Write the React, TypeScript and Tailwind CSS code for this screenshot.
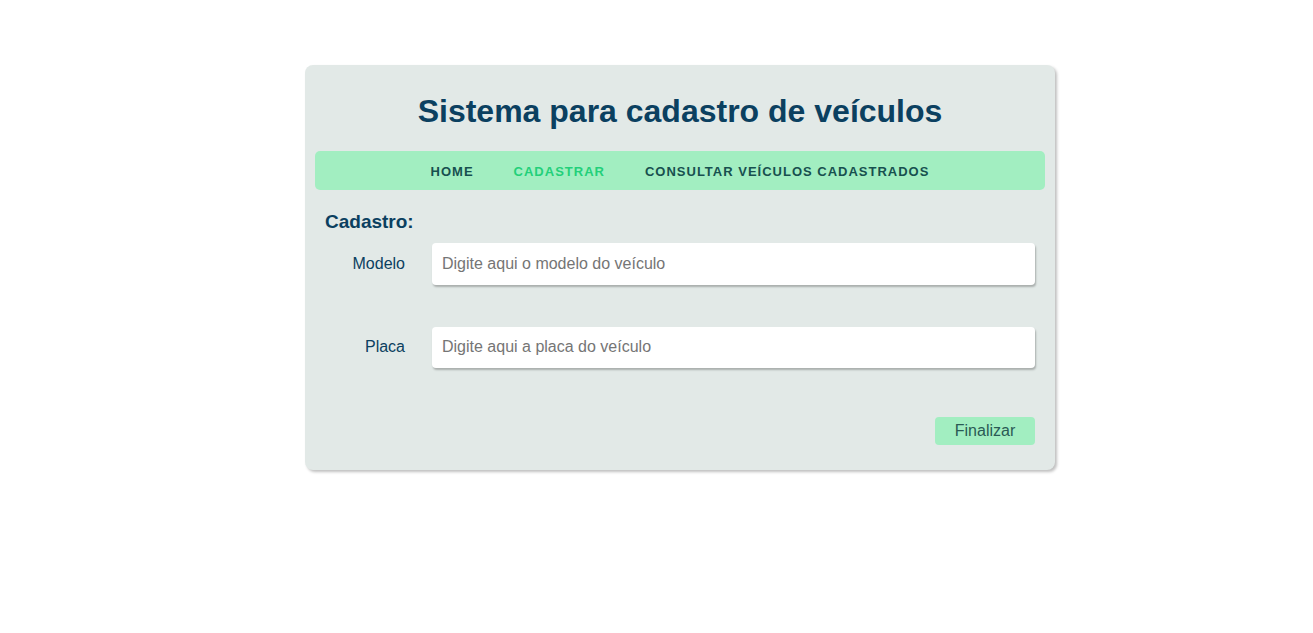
import React from "react";

export default function App() {
  return (
    <div className="min-h-screen w-full bg-white" style={{ fontFamily: '"Liberation Sans", Arial, sans-serif' }}>
      <div className="pt-[65px] pl-[305px]">
        <div className="w-[750px] bg-[#e2e9e7] rounded-[8px] shadow-[2px_2px_3px_rgba(0,0,0,0.25)] pt-[28px] pb-[25px]">
          <h1 className="text-center text-[32px] leading-[37px] font-bold text-[#0b4060]">
            Sistema para cadastro de veículos
          </h1>
          <nav className="mx-[10px] mt-[21px] h-[39px] pt-[2px] bg-[#a2eec1] rounded-[5px] flex items-center justify-center">
            <a className="px-[20px] text-[13px] font-bold tracking-[1px] text-[#17504f]">HOME</a>
            <a className="px-[20px] text-[13px] font-bold tracking-[1px] text-[#22d07a]">CADASTRAR</a>
            <a className="px-[20px] text-[13px] font-bold tracking-[1px] text-[#17504f]">CONSULTAR VEÍCULOS CADASTRADOS</a>
          </nav>
          <div className="px-[20px]">
            <h2 className="mt-[21px] text-[19px] leading-[22px] font-bold text-[#0b4060]">Cadastro:</h2>
            <div className="mt-[10px] flex items-center">
              <label className="w-[80px] text-right text-[16px] text-[#0b4060]">Modelo</label>
              <input
                className="ml-[27px] flex-1 h-[42px] bg-white rounded-[4px] px-[10px] text-[16px] text-[#333] placeholder:text-[#757575] shadow-[1px_2px_2px_rgba(0,0,0,0.25)] outline-none"
                placeholder="Digite aqui o modelo do veículo"
              />
            </div>
            <div className="mt-[42px] flex items-center">
              <label className="w-[80px] text-right text-[16px] text-[#0b4060] mt-[-2px]">Placa</label>
              <input
                className="ml-[27px] flex-1 h-[41px] pb-[2px] bg-white rounded-[4px] px-[10px] text-[16px] text-[#333] placeholder:text-[#757575] shadow-[1px_2px_2px_rgba(0,0,0,0.25)] outline-none"
                placeholder="Digite aqui a placa do veículo"
              />
            </div>
            <div className="mt-[49px] flex justify-end">
              <button className="w-[100px] h-[28px] bg-[#a2eec1] rounded-[4px] text-[16px] text-[#2a5a55]">
                Finalizar
              </button>
            </div>
          </div>
        </div>
      </div>
    </div>
  );
}
